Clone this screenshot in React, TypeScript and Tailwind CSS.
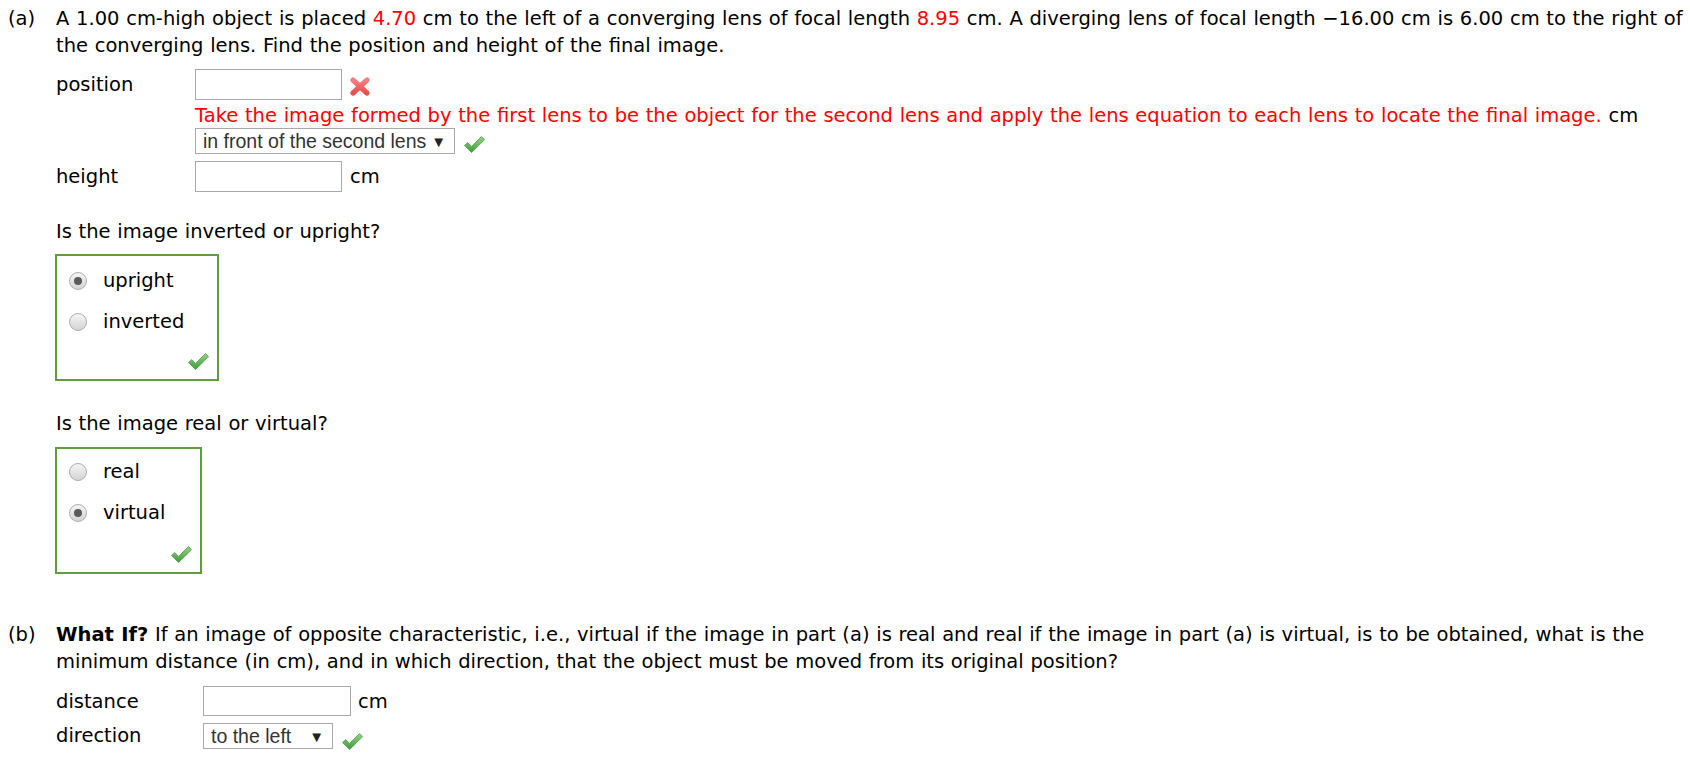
import React from 'react';

const font = { fontFamily: 'Verdana, "DejaVu Sans", sans-serif', wordSpacing: '0.5px' };
const arial = { fontFamily: '"Liberation Sans", Arial, sans-serif', wordSpacing: '0px' };

function Check() {
  return (
    <svg width="23" height="19" viewBox="0 0 23 19" className="shrink-0">
      <defs>
        <linearGradient id="chk" x1="0" y1="0" x2="0" y2="1">
          <stop offset="0" stopColor="#92d683" />
          <stop offset="1" stopColor="#3e993b" />
        </linearGradient>
      </defs>
      <path
        d="M1.5 10.5 L4.8 7.6 L8.6 11.4 L18.4 1.6 L21.6 4.6 L8.6 17.6 Z"
        fill="url(#chk)"
        stroke="#4f9c47"
        strokeWidth="0.8"
        strokeLinejoin="round"
      />
    </svg>
  );
}

function Cross() {
  return (
    <svg width="22" height="21" viewBox="0 0 22 21" className="shrink-0">
      <defs>
        <linearGradient id="crs" x1="0" y1="0" x2="0" y2="1">
          <stop offset="0" stopColor="#f78080" />
          <stop offset="1" stopColor="#e84e4e" />
        </linearGradient>
      </defs>
      <g stroke="url(#crs)" strokeWidth="5.2" strokeLinecap="round">
        <line x1="4" y1="4" x2="18" y2="17" />
        <line x1="18" y1="4" x2="4" y2="17" />
      </g>
    </svg>
  );
}

function Radio({ checked }: { checked?: boolean }) {
  return (
    <span className="w-[18px] h-[18px] rounded-full border border-[#aeaeae] bg-gradient-to-b from-[#f5f5f5] to-[#d4d4d4] flex items-center justify-center shrink-0">
      {checked && <span className="w-[8px] h-[8px] rounded-full bg-[#5b5b5b]" />}
    </span>
  );
}

function TextBox({ w, h }: { w: string; h: string }) {
  return <div className={`${w} ${h} border border-[#a9a9a9] bg-white shrink-0`} />;
}

function Select({ label, w }: { label: string; w: string }) {
  return (
    <div
      className={`${w} h-[26px] border border-[#a9a9a9] bg-white flex items-center justify-between pl-[7px] pr-[8px] text-[19.5px] leading-[24px] text-[#333] shrink-0`}
      style={arial}
    >
      <span>{label}</span>
      <span className="text-[15px] leading-[15px] text-[#222]">▼</span>
    </div>
  );
}

function RadioBox({ options, checked, w, padTop }: { options: string[]; checked: number; w: string; padTop: string }) {
  return (
    <div className={`${w} h-[127px] border-2 border-[#5f9e3c] -ml-px flex flex-col ${padTop}`}>
      {options.map((o, i) => (
        <div key={o} className="flex items-center h-[41px] pl-[12px]">
          <Radio checked={i === checked} />
          <span className="ml-[16px]">{o}</span>
        </div>
      ))}
      <div className="flex justify-end pr-[7px] mt-auto pb-[8px]">
        <Check />
      </div>
    </div>
  );
}

export default function App() {
  return (
    <div className="w-[1690px] h-[760px] bg-white text-black text-[19.5px] leading-[27px] pl-[8px] pt-[5px]" style={font}>
      {/* part a */}
      <div className="flex">
        <span className="w-[48px] shrink-0">(a)</span>
        <div className="flex-1">
          <p>
            A 1.00 cm-high object is placed <span className="text-[#ff0000]">4.70</span> cm to the left of a converging
            lens of focal length <span className="text-[#ff0000]">8.95</span> cm. A diverging lens of focal length
            −16.00 cm is 6.00 cm to the right of the converging lens. Find the position and height of the final image.
          </p>

          <div className="flex mt-[10px]">
            <span className="w-[139px] shrink-0 leading-[31px]">position</span>
            <div className="flex flex-col">
              <div className="flex items-start gap-[7px]">
                <TextBox w="w-[147px]" h="h-[31px]" />
                <div className="mt-[7px]">
                  <Cross />
                </div>
              </div>
              <div className="leading-[25px] mt-[3px] whitespace-nowrap">
                <span className="text-[#ff0000]">
                  Take the image formed by the first lens to be the object for the second lens and apply the lens
                  equation to each lens to locate the final image.
                </span>{' '}
                cm
              </div>
              <div className="flex items-start gap-[8px]">
                <Select label="in front of the second lens" w="w-[260px]" />
                <div className="mt-[7px]">
                  <Check />
                </div>
              </div>
            </div>
          </div>

          <div className="flex mt-[7px] items-center">
            <span className="w-[139px] shrink-0 leading-[31px]">height</span>
            <TextBox w="w-[147px]" h="h-[31px]" />
            <span className="ml-[8px]">cm</span>
          </div>

          <p className="mt-[26px]">Is the image inverted or upright?</p>
          <div className="mt-[9px]">
            <RadioBox options={['upright', 'inverted']} checked={0} w="w-[164px]" padTop="pt-[4px]" />
          </div>

          <p className="mt-[29px]">Is the image real or virtual?</p>
          <div className="mt-[10px]">
            <RadioBox options={['real', 'virtual']} checked={1} w="w-[147px]" padTop="pt-[2px]" />
          </div>
        </div>
      </div>

      {/* part b */}
      <div className="flex mt-[47px]">
        <span className="w-[48px] shrink-0">(b)</span>
        <div className="flex-1">
          <p>
            <b>What If?</b> If an image of opposite characteristic, i.e., virtual if the image in part (a) is real and
            real if the image in part (a) is virtual, is to be obtained, what is the minimum distance (in cm), and in
            which direction, that the object must be moved from its original position?
          </p>
          <div className="flex items-center mt-[11px]">
            <span className="w-[147px] shrink-0">distance</span>
            <TextBox w="w-[148px]" h="h-[30px]" />
            <span className="ml-[7px]">cm</span>
          </div>
          <div className="flex items-start mt-[7px]">
            <span className="w-[147px] shrink-0 leading-[26px]">direction</span>
            <Select label="to the left" w="w-[130px]" />
            <div className="ml-[8px] mt-[9px]">
              <Check />
            </div>
          </div>
        </div>
      </div>
    </div>
  );
}
